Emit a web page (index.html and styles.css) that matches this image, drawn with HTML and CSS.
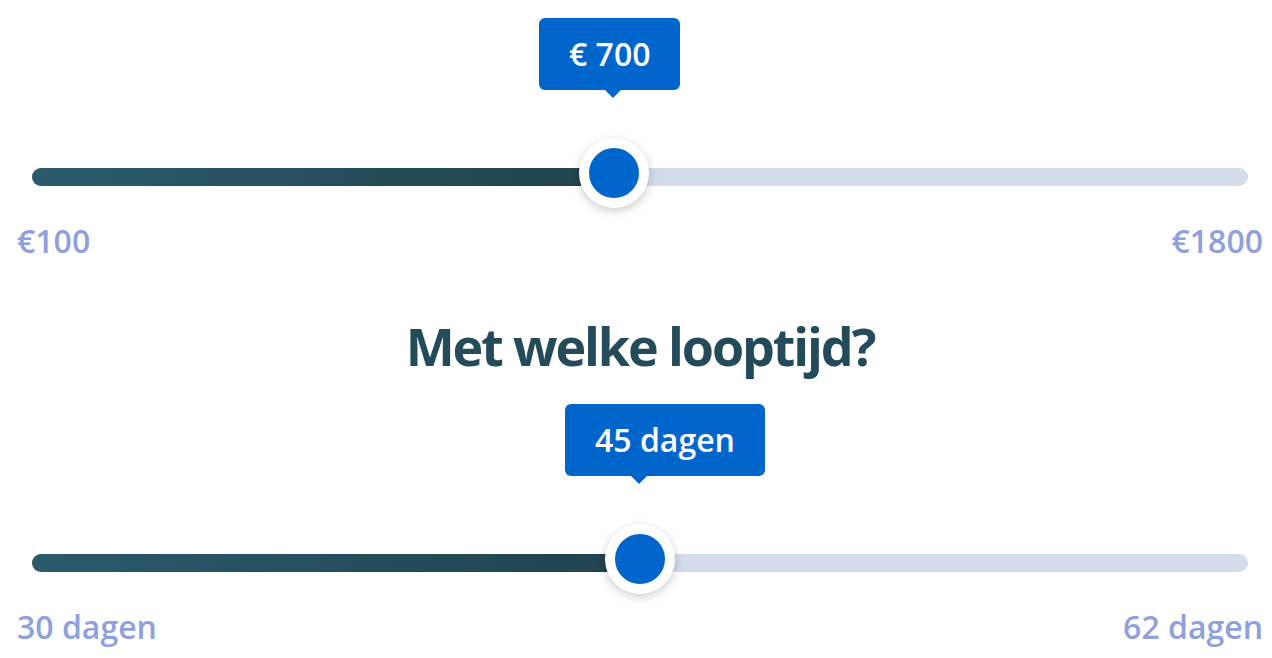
FILE: index.html
```html
<!DOCTYPE html>
<html lang="nl">

<head>
    <meta charset="UTF-8">
    <meta name="viewport" content="width=device-width, initial-scale=1.0">
    <title>Lening berekenen</title>
    <link rel="stylesheet" href="styles.css">
</head>

<body>
    <main class="calculator">
        <!-- Bedrag -->
        <div class="slider">
            <div class="slider-value">
                <div class="bubble" style="left: 47.86%;">€ 700</div>
            </div>
            <div class="track">
                <div class="track-fill" style="width: 47.86%;"></div>
                <div class="thumb" style="left: 47.86%;"></div>
            </div>
            <div class="slider-labels">
                <span>€100</span>
                <span>€1800</span>
            </div>
        </div>

        <h2 class="question">Met welke looptijd?</h2>

        <!-- Looptijd -->
        <div class="slider">
            <div class="slider-value">
                <div class="bubble" style="left: 50%;">45 dagen</div>
            </div>
            <div class="track">
                <div class="track-fill" style="width: 50%;"></div>
                <div class="thumb" style="left: 50%;"></div>
            </div>
            <div class="slider-labels">
                <span>30 dagen</span>
                <span>62 dagen</span>
            </div>
        </div>
    </main>
</body>

</html>
```

FILE: styles.css
```css
/* Reset */
* {
    margin: 0;
    padding: 0;
    box-sizing: border-box;
    font-family: 'Open Sans', 'Noto Sans', Arial, sans-serif;
}

:root {
    --blauw: #0066cc;
    --donker: #244b5a;
    --spoor: #d3dcea;
    --label: #8fa0dc;
}

body {
    background-color: #fff;
    color: var(--donker);
}

.calculator {
    padding: 0 9px 0 17px;
}

/* Slider */
.slider-value {
    position: relative;
    height: 168px;
    margin: 0 15px;
}

.bubble {
    position: absolute;
    top: 18px;
    transform: translateX(-75px);
    height: 72px;
    line-height: 72px;
    padding: 0 30px;
    background-color: var(--blauw);
    color: #fff;
    font-size: 32px;
    font-weight: 600;
    border-radius: 6px;
    white-space: nowrap;
}

.bubble::after {
    content: '';
    position: absolute;
    left: 65px;
    bottom: -8px;
    border-left: 9px solid transparent;
    border-right: 9px solid transparent;
    border-top: 9px solid var(--blauw);
}

.track {
    position: relative;
    height: 18px;
    margin: 0 15px;
    background-color: var(--spoor);
    border-radius: 9px;
}

.track-fill {
    height: 100%;
    border-radius: 9px 0 0 9px;
    background: linear-gradient(90deg, #2b5a6a, #22424e);
}

.thumb {
    position: absolute;
    top: -30px;
    width: 70px;
    height: 70px;
    margin-left: -35px;
    border-radius: 50%;
    border: 10px solid #fff;
    background-color: var(--blauw);
    box-shadow: 0 3px 10px rgba(0, 0, 0, 0.2);
}

.slider-labels {
    display: flex;
    justify-content: space-between;
    margin-top: 33px;
    height: 44px;
    line-height: 44px;
    font-size: 32px;
    font-weight: 600;
    color: var(--label);
}

/* Vraag */
.question {
    margin: 47px 0 4px;
    text-align: center;
    font-size: 52px;
    letter-spacing: -2.1px;
    line-height: 72px;
    font-weight: 700;
    color: var(--donker);
}
```
